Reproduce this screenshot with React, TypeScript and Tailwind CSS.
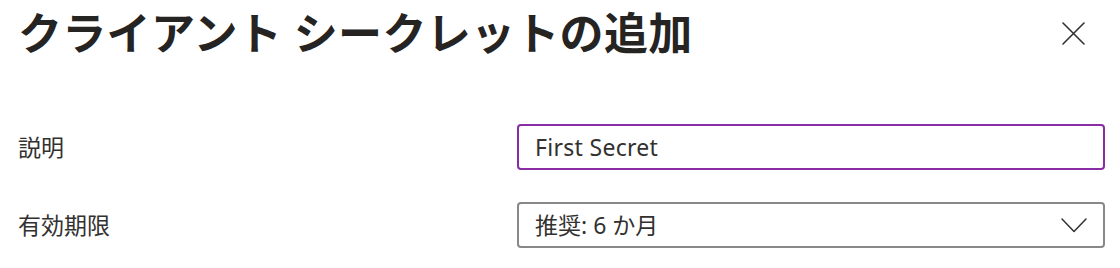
const font = { fontFamily: '"Noto Sans", "Noto Sans CJK JP", sans-serif' };

export default function App() {
  return (
    <div
      className="w-[1120px] h-[268px] bg-white text-[#323130] pl-[18px] pr-[15px] overflow-hidden"
      style={font}
    >
      <div className="flex items-start justify-between pt-[3px]">
        <h1 className="text-[44px] font-bold leading-[60px] tracking-[0.3px] text-[#252423]">
          クライアント シークレットの追加
        </h1>
        <button className="mt-[19px] mr-[20px] text-[#323130]">
          <svg width="23" height="23" viewBox="0 0 23 23" fill="none" stroke="currentColor" strokeWidth="1.6" strokeLinecap="round">
            <path d="M1 1L22 22M22 1L1 22" />
          </svg>
        </button>
      </div>

      <div className="mt-[61px] flex flex-col gap-[32px]">
        <div className="flex items-center">
          <label className="w-[499px] text-[23px]">説明</label>
          <div className="flex-1 h-[46px] border-2 border-[#8a2da5] rounded-[4px] flex items-center px-[16px] text-[23px] tracking-[0.3px]">
            First Secret
          </div>
        </div>
        <div className="flex items-center">
          <label className="w-[499px] text-[23px]">有効期限</label>
          <div className="flex-1 h-[46px] border-2 border-[#8a8886] rounded-[4px] flex items-center justify-between pl-[16px] pr-[16px] text-[23px]">
            <span>推奨: 6 か月</span>
            <svg width="26" height="15" viewBox="0 0 26 15" fill="none" stroke="currentColor" strokeWidth="1.5" strokeLinecap="round" strokeLinejoin="round">
              <path d="M1 1L13 13.5L25 1" />
            </svg>
          </div>
        </div>
      </div>
    </div>
  );
}
